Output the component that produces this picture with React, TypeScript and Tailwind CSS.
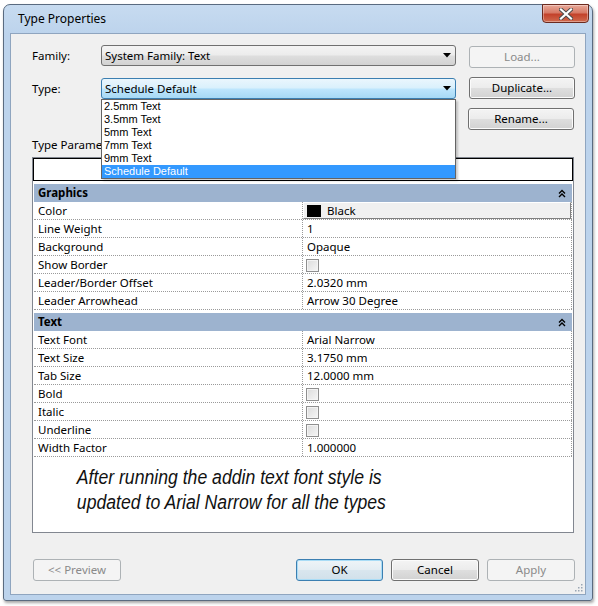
import React from 'react';

const uiFont = "font-['Segoe_UI','Noto_Sans',sans-serif]";

type BtnProps = {
  children: React.ReactNode;
  disabled?: boolean;
  focused?: boolean;
  className?: string;
  w?: string;
};

const Btn: React.FC<BtnProps> = ({ children, disabled, focused, className = '', w = 'w-[106px]' }) => {
  let look =
    'border-[#707070] text-black bg-[linear-gradient(to_bottom,#f4f4f4,#ececec_48%,#dedede_52%,#d2d2d2)] shadow-[inset_0_0_0_1px_#fbfbfb]';
  if (disabled) look = 'border-[#adb2b5] text-[#8a8a8a] bg-[#f4f4f4]';
  if (focused)
    look =
      'border-[#3c7fb1] text-black bg-[linear-gradient(to_bottom,#eef4f8,#e4edf3_48%,#d9e6ee_52%,#d1e0ea)] shadow-[inset_0_0_0_1px_#a9dcf6]';
  return (
    <div
      className={`flex h-[22px] ${w} items-center justify-center rounded-[3px] border text-[11.5px] ${look} ${className}`}
    >
      {children}
    </div>
  );
};

const Arrow = () => (
  <svg width="8" height="5" viewBox="0 0 8 5" className="mr-[4px]">
    <path d="M0 0H8L4 4.5Z" fill="#000" />
  </svg>
);

const Chevrons = () => (
  <svg width="8" height="9" viewBox="0 0 8 9" className="mr-[6px]">
    <path d="M1 4.5L4 1.5L7 4.5M1 8L4 5L7 8" fill="none" stroke="#000" strokeWidth="1.4" />
  </svg>
);

const Check = () => (
  <div className="mt-[3px] ml-[3px] h-[13px] w-[13px] border border-[#8f8f8f] bg-[linear-gradient(135deg,#dcdcdc,#f6f6f6)] shadow-[inset_0_0_0_1px_#f4f4f4]" />
);

type Row = { label: string; value?: string; check?: boolean; color?: boolean };

const graphics: Row[] = [
  { label: 'Color', color: true },
  { label: 'Line Weight', value: '1' },
  { label: 'Background', value: 'Opaque' },
  { label: 'Show Border', check: true },
  { label: 'Leader/Border Offset', value: '2.0320 mm' },
  { label: 'Leader Arrowhead', value: 'Arrow 30 Degree' },
];

const textRows: Row[] = [
  { label: 'Text Font', value: 'Arial Narrow' },
  { label: 'Text Size', value: '3.1750 mm' },
  { label: 'Tab Size', value: '12.0000 mm' },
  { label: 'Bold', check: true },
  { label: 'Italic', check: true },
  { label: 'Underline', check: true },
  { label: 'Width Factor', value: '1.000000' },
];

const PropRow: React.FC<{ row: Row }> = ({ row }) => (
  <div className="flex h-[18px] border-b border-dotted border-[#9a9a9a]">
    <div className="w-[268px] pl-[4px] leading-[17px]">{row.label}</div>
    <div className="flex-1 border-l border-r border-dotted border-[#9a9a9a]">
      {row.color ? (
        <div className="flex h-[17px] items-center border-t border-l border-white border-r-[#808080] border-b-[#808080] border-r border-b bg-[#f0f0f0] pl-[3px]">
          <div className="h-[12px] w-[14px] bg-black" />
          <span className="ml-[6px] leading-[15px]">Black</span>
        </div>
      ) : row.check ? (
        <Check />
      ) : (
        <div className="pl-[4px] leading-[17px]">{row.value}</div>
      )}
    </div>
  </div>
);

const Group: React.FC<{ title: string; rows: Row[] }> = ({ title, rows }) => (
  <div className="mt-[3px]">
    <div className="flex h-[18px] items-center justify-between bg-[#9db3cf] pl-[4px] font-bold">
      <span>{title}</span>
      <Chevrons />
    </div>
    {rows.map((r) => (
      <PropRow key={r.label} row={r} />
    ))}
  </div>
);

export default function App() {
  const types = ['2.5mm Text', '3.5mm Text', '5mm Text', '7mm Text', '9mm Text'];

  return (
    <div className={`h-[606px] w-[598px] overflow-hidden bg-white pt-[4px] pl-[3px] ${uiFont} text-[11.5px] text-black`}>
      {/* Window frame */}
      <div className="relative flex h-[597px] w-[590px] flex-col rounded-t-[7px] rounded-b-[3px] border border-[#5a6b80] bg-[linear-gradient(to_bottom,#c7dbf0,#bcd3ec_30px,#bcd3ec)] px-[6px] pb-[5px] shadow-[1px_2px_3px_rgba(0,0,0,0.35)]">
        <div className="h-[28px] pl-[8px] pt-[6px] text-[12px] leading-[16px] text-black">Type Properties</div>

        {/* Close button */}
        <div className="absolute top-[-1px] right-[3px] flex h-[19px] w-[47px] items-center justify-center rounded-b-[4px] border border-[#6b2a1f] bg-[linear-gradient(to_bottom,#e9a999,#d77a66_45%,#c3422b_55%,#d06a4e)] shadow-[inset_0_0_0_1px_rgba(255,255,255,0.35)]">
          <svg width="14" height="12" viewBox="0 0 14 12">
            <path d="M2 1.5L12 10.5M12 1.5L2 10.5" stroke="#4a4a4a" strokeWidth="4" strokeLinecap="square" />
            <path d="M2 1.5L12 10.5M12 1.5L2 10.5" stroke="#fff" strokeWidth="2.2" strokeLinecap="square" />
          </svg>
        </div>

        {/* Client area */}
        <div className="relative flex flex-1 flex-col border border-[#8fa5bf] bg-[#f0f0f0]">
          {/* Family */}
          <div className="mt-[11px] flex items-start pl-[21px]">
            <div className="w-[69px] pt-[3px] leading-[16px]">Family:</div>
            <div className="flex h-[21px] w-[355px] items-center justify-between rounded-[3px] border border-[#707070] bg-[linear-gradient(to_bottom,#f4f4f4,#ececec_48%,#dedede_52%,#d2d2d2)] pl-[3px]">
              <span>System Family: Text</span>
              <Arrow />
            </div>
            <Btn disabled className="ml-[13px] mt-[1px]">Load...</Btn>
          </div>

          {/* Type */}
          <div className="mt-[10px] flex items-start pl-[21px]">
            <div className="w-[69px] pt-[3px] leading-[16px]">Type:</div>
            <div className="relative">
              <div className="flex h-[21px] w-[355px] items-center justify-between rounded-[3px] border border-[#3c7fb1] bg-[linear-gradient(to_bottom,#eaf6fd,#d9f0fc_48%,#bee6fd_52%,#a7d9f5)] pl-[3px]">
                <span>Schedule Default</span>
                <Arrow />
              </div>
              {/* Open list */}
              <div className="absolute top-[21px] left-0 z-10 w-[355px] border border-[#646464] bg-white font-['Liberation_Sans',sans-serif] text-[11px] shadow-[2px_2px_2px_rgba(0,0,0,0.2)]">
                {types.map((t) => (
                  <div key={t} className="h-[13px] pl-[2px] leading-[13px]">
                    {t}
                  </div>
                ))}
                <div className="h-[13px] bg-[#3399ff] pl-[2px] leading-[13px] text-white">Schedule Default</div>
              </div>
            </div>
            <Btn className="ml-[13px] mt-[-1px]">Duplicate...</Btn>
          </div>

          {/* Rename */}
          <div className="mt-[9px] flex justify-end pr-[11px]">
            <Btn>Rename...</Btn>
          </div>

          <div className="mt-[7px] pl-[21px] leading-[16px]">Type Parameters</div>

          {/* Property grid */}
          <div className="mt-[4px] ml-[21px] flex h-[376px] w-[542px] flex-col border border-[#828790] bg-white">
            <div className="flex h-[23px] border border-black">
              <div className="w-[268px]" />
              <div className="flex-1 border-l border-[#d0d0d0]" />
            </div>
            <div className="mx-[1px]">
              <Group title="Graphics" rows={graphics} />
              <Group title="Text" rows={textRows} />
            </div>
            <div className="mt-[7px] origin-left scale-x-[0.86] pl-[51px] font-['Liberation_Sans',sans-serif] text-[20.5px] italic leading-[25px] text-[#111]">
              <div>After running the addin text font style is</div>
              <div>updated to Arial Narrow for all the types</div>
            </div>
          </div>

          {/* Bottom buttons */}
          <div className="mt-[26px] flex pl-[22px]">
            <Btn disabled w="w-[88px]">&lt;&lt; Preview</Btn>
            <Btn focused w="w-[87px]" className="ml-[175px]">OK</Btn>
            <Btn w="w-[88px]" className="ml-[8px]">Cancel</Btn>
            <Btn disabled w="w-[88px]" className="ml-[8px]">Apply</Btn>
          </div>

          {/* Size grip */}
          <svg width="10" height="10" viewBox="0 0 10 10" className="absolute right-[2px] bottom-[2px]">
            {[
              [8, 2],
              [8, 5],
              [5, 5],
              [8, 8],
              [5, 8],
              [2, 8],
            ].map(([x, y]) => (
              <rect key={`${x}-${y}`} x={x} y={y} width="1.5" height="1.5" fill="#9aa6b4" />
            ))}
          </svg>
        </div>
      </div>
    </div>
  );
}
